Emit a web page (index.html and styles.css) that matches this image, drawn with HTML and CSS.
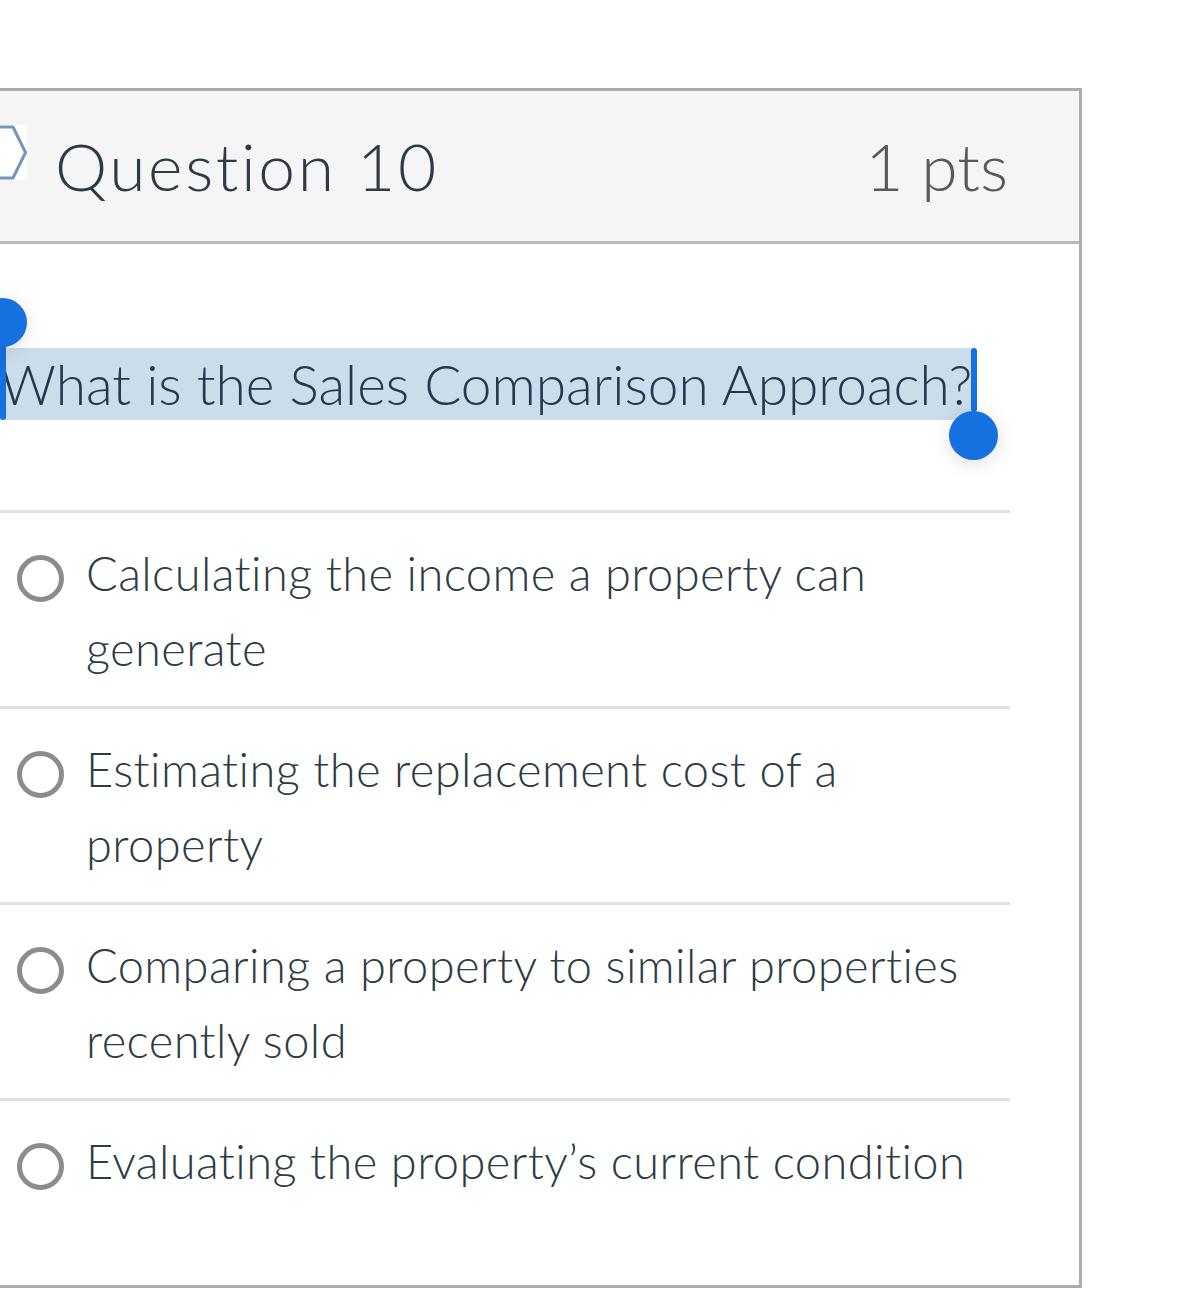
FILE: index.html
```html
<!DOCTYPE html>
<html lang="en">

<head>
    <meta charset="UTF-8">
    <meta name="viewport" content="width=device-width, initial-scale=1.0">
    <title>Question 10</title>
    <link rel="stylesheet" href="styles.css">
</head>

<body>
    <div class="question-card">
        <div class="question-header">
            <div class="header-left">
                <svg class="flag-icon" width="27" height="55" viewBox="0 0 27 55">
                    <rect width="27" height="55" fill="#fff" />
                    <polyline points="-20,2 13,2 25.5,27.5 13,53 -20,53" fill="none" stroke="#7297b8"
                        stroke-width="3" stroke-linejoin="round" />
                </svg>
                <span class="question-title">Question 10</span>
            </div>
            <span class="question-points">1 pts</span>
        </div>

        <div class="question-text">
            <span class="selected">What is the Sales Comparison Approach?<span class="handle handle-start"></span><span class="handle handle-end"></span></span>
        </div>

        <div class="answers">
            <div class="answer">
                <span class="radio"></span>
                <span class="answer-label">Calculating the income a property can generate</span>
            </div>
            <div class="answer">
                <span class="radio"></span>
                <span class="answer-label">Estimating the replacement cost of a property</span>
            </div>
            <div class="answer">
                <span class="radio"></span>
                <span class="answer-label">Comparing a property to similar properties recently sold</span>
            </div>
            <div class="answer">
                <span class="radio"></span>
                <span class="answer-label">Evaluating the property’s current condition</span>
            </div>
        </div>
    </div>
</body>

</html>
```

FILE: styles.css
```css
:root {
    --text--dark: #2d3b45;
    --handle--blue: #1570e0;
}

body {
    margin: 0;
    padding: 88px 0 0 0;
    background-color: #fff;
    font-family: Lato, "Noto Sans", sans-serif;
    overflow: hidden;
}

.question-card {
    margin-left: -3px;
    width: 1079px;
    border: 3px solid #acacac;
    background-color: #fff;
}

.question-header {
    height: 150px;
    background-color: #f5f5f5;
    border-bottom: 3px solid #b9b9b9;
    display: flex;
    align-items: center;
    justify-content: space-between;
    padding-right: 71px;
}

.header-left {
    display: flex;
    align-items: center;
}

.flag-icon {
    display: block;
    margin-top: -27px;
    margin-right: 28px;
}

.question-title {
    font-size: 66px;
    font-weight: 300;
    letter-spacing: 2.6px;
    color: var(--text--dark);
    line-height: 1.2;
}

.question-points {
    font-size: 66px;
    font-weight: 300;
    color: #595959;
    line-height: 1.2;
}

.question-text {
    padding: 104px 0 90px 0;
}

.selected {
    position: relative;
    display: inline-block;
    background-color: #cbdcec;
    font-size: 55px;
    font-weight: 300;
    line-height: 72px;
    color: #23394e;
}

.handle {
    position: absolute;
    width: 6px;
    background-color: var(--handle--blue);
    border-radius: 3px;
}

.handle::after {
    content: '';
    position: absolute;
    width: 49px;
    height: 49px;
    border-radius: 50%;
    background-color: var(--handle--blue);
    box-shadow: 0 4px 20px rgba(0, 0, 0, 0.12);
}

.handle-start {
    left: 0;
    top: -10px;
    bottom: 0;
}

.handle-start::after {
    left: -22px;
    top: -40px;
}

.handle-end {
    right: -5px;
    top: 0;
    bottom: 8px;
}

.handle-end::after {
    left: -22px;
    bottom: -48px;
}

.answers {
    padding: 0 69px 66px 0;
}

.answer {
    display: flex;
    align-items: flex-start;
    border-top: 3px solid #e1e1e1;
    padding: 23px 0 20px 0;
}

.radio {
    flex: none;
    box-sizing: border-box;
    width: 47px;
    height: 47px;
    border: 5px solid #8c8c8e;
    border-radius: 50%;
    margin: 19px 22px 0 17px;
}

.answer-label {
    font-size: 47px;
    font-weight: 300;
    letter-spacing: 0.4px;
    line-height: 75px;
    color: var(--text--dark);
}
```
